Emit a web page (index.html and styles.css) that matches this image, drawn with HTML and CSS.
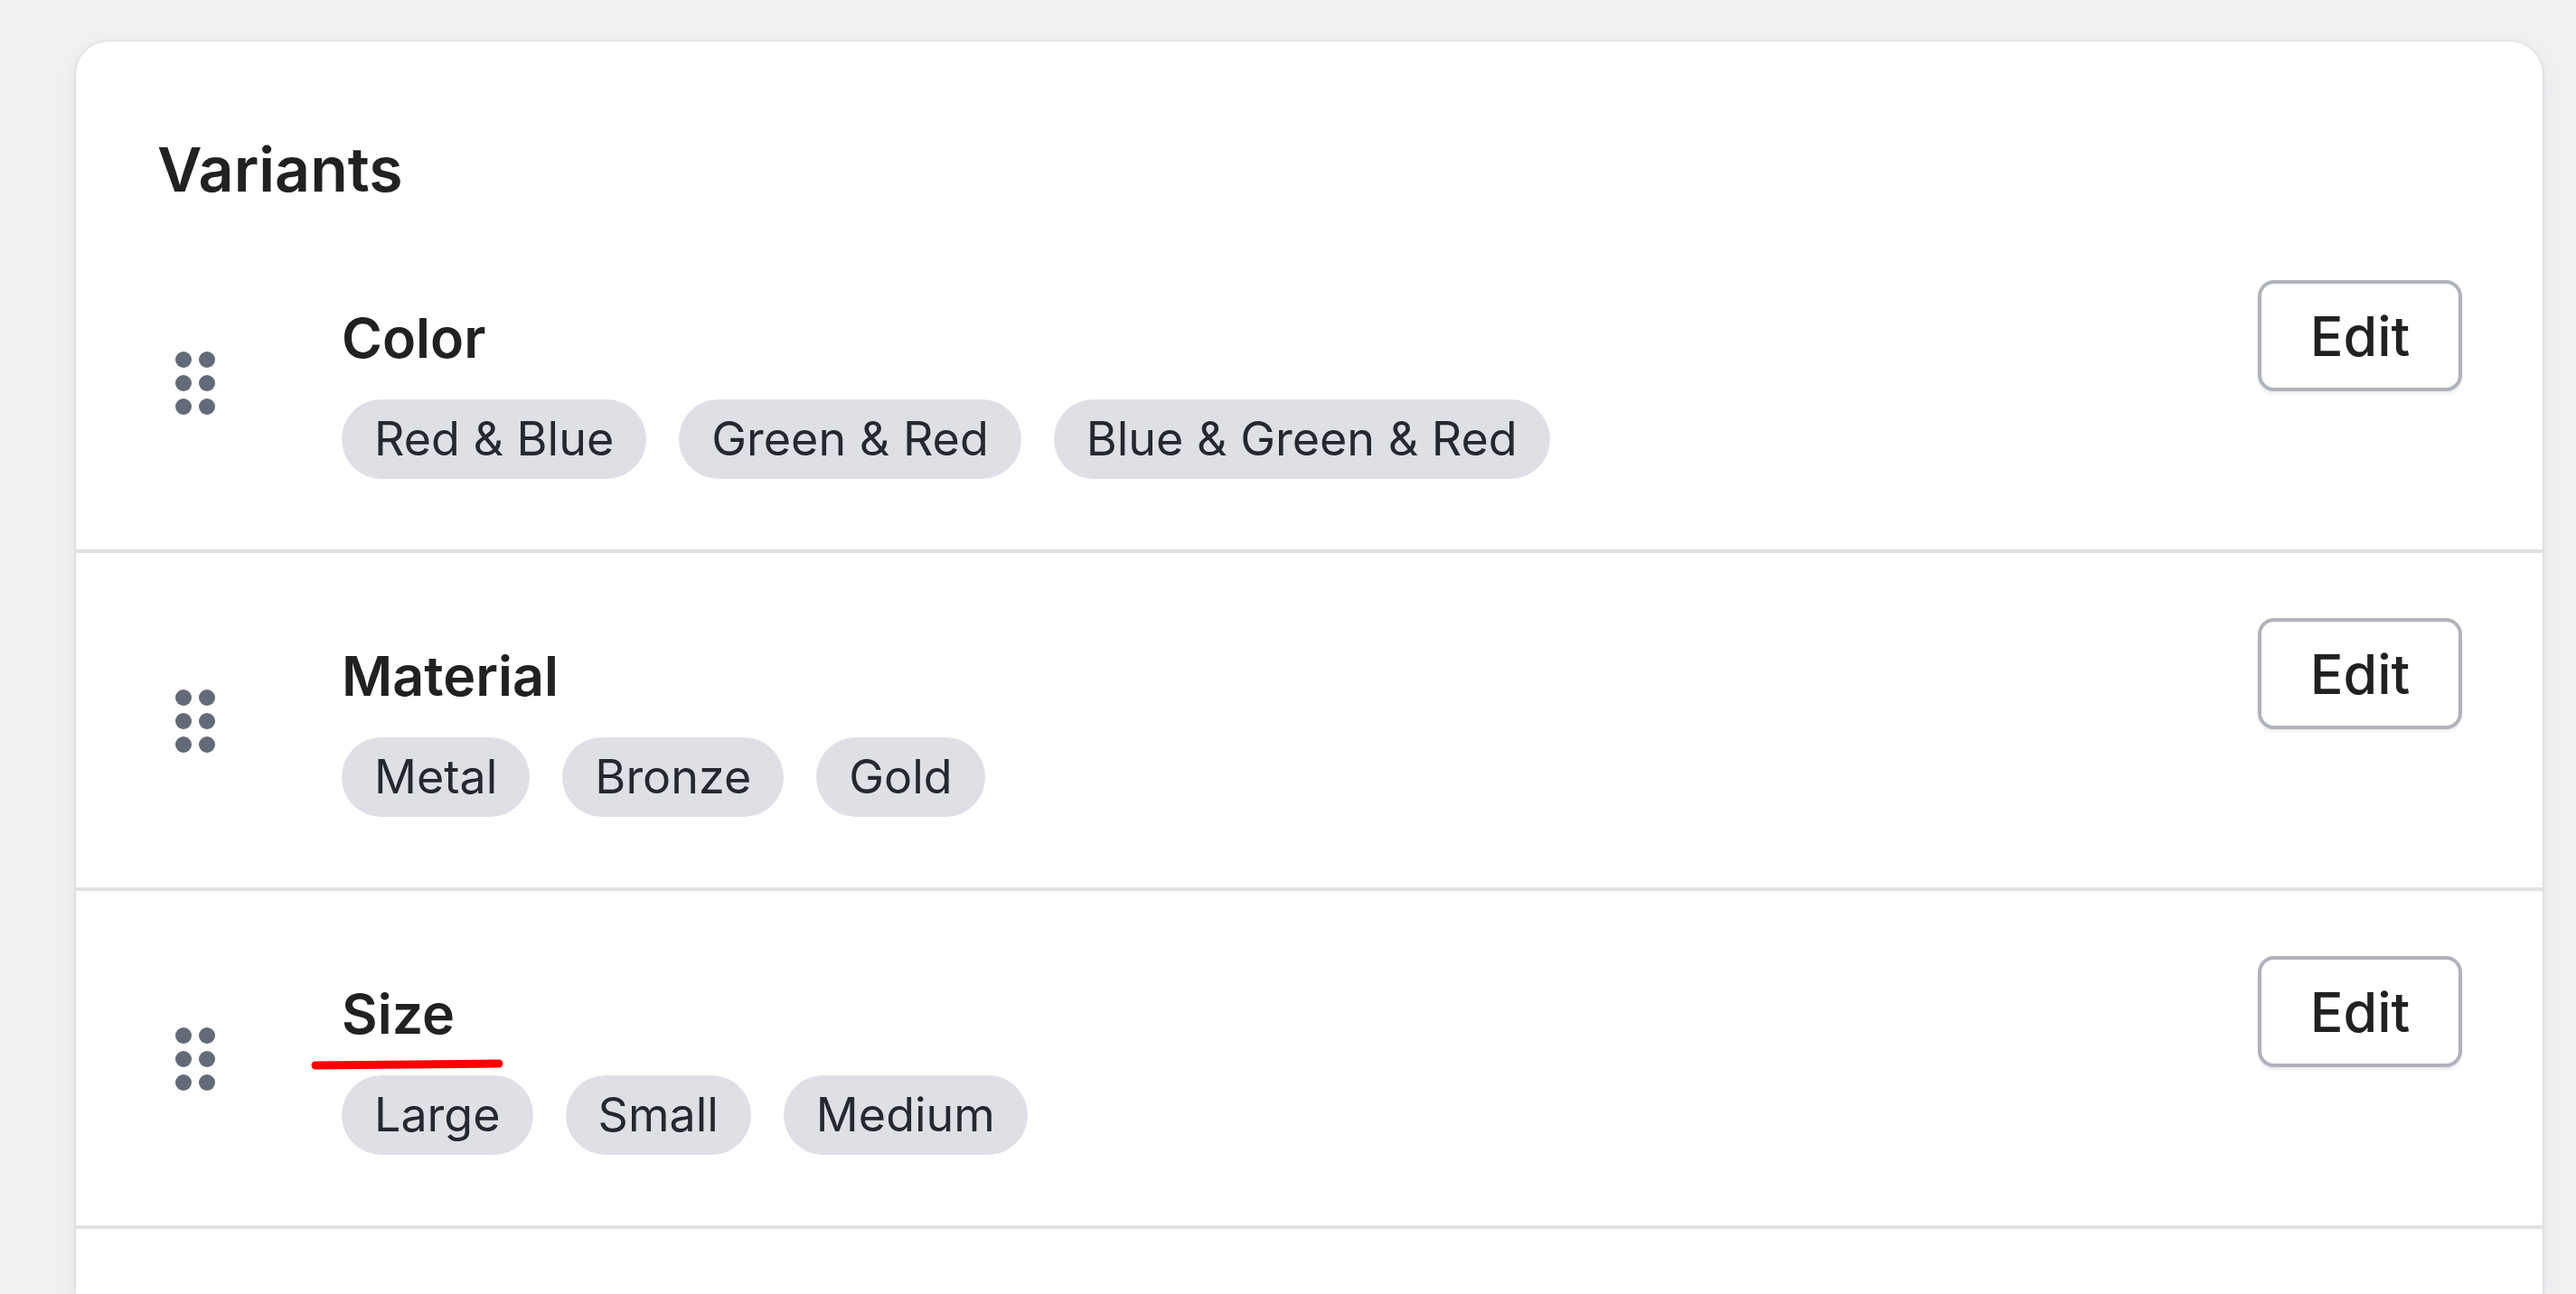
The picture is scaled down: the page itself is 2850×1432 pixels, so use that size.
FILE: index.html
```html
<!DOCTYPE html>
<html lang="en">
<head>
    <meta charset="UTF-8">
    <meta name="viewport" content="width=device-width, initial-scale=1.0">
    <title>Variants</title>
    <link rel="stylesheet" href="styles.css">
</head>
<body>
    <svg class="sprite" aria-hidden="true">
        <symbol id="drag" viewBox="0 0 44 70">
            <circle cx="9" cy="9" r="9"/><circle cx="35" cy="9" r="9"/>
            <circle cx="9" cy="35" r="9"/><circle cx="35" cy="35" r="9"/>
            <circle cx="9" cy="61" r="9"/><circle cx="35" cy="61" r="9"/>
        </symbol>
    </svg>
    <main class="card">
        <h1 class="card-title">Variants</h1>
        <ul class="variants">
            <li class="variant">
                <button class="handle" type="button" aria-label="Reorder Color"><svg><use href="#drag"/></svg></button>
                <div class="variant-body">
                    <h2 class="variant-name">Color</h2>
                    <ul class="tags">
                        <li class="tag">Red &amp; Blue</li>
                        <li class="tag">Green &amp; Red</li>
                        <li class="tag">Blue &amp; Green &amp; Red</li>
                    </ul>
                </div>
                <button class="edit" type="button">Edit</button>
            </li>
            <li class="variant">
                <button class="handle" type="button" aria-label="Reorder Material"><svg><use href="#drag"/></svg></button>
                <div class="variant-body">
                    <h2 class="variant-name">Material</h2>
                    <ul class="tags">
                        <li class="tag">Metal</li>
                        <li class="tag">Bronze</li>
                        <li class="tag">Gold</li>
                    </ul>
                </div>
                <button class="edit" type="button">Edit</button>
            </li>
            <li class="variant">
                <button class="handle" type="button" aria-label="Reorder Size"><svg><use href="#drag"/></svg></button>
                <div class="variant-body">
                    <h2 class="variant-name">Size</h2>
                    <ul class="tags">
                        <li class="tag">Large</li>
                        <li class="tag">Small</li>
                        <li class="tag">Medium</li>
                    </ul>
                    <svg class="marker" viewBox="0 0 216 16" aria-hidden="true"><path d="M5 9 L208 7"/></svg>
                </div>
                <button class="edit" type="button">Edit</button>
            </li>
        </ul>
    </main>
</body>
</html>
```
FILE: styles.css
```css
* {
    box-sizing: border-box;
}
body {
    font-family: Inter, 'Liberation Sans', sans-serif;
    background-color: #eff1f3;
    color: #202123;
    margin: 0;
    padding: 46px 37px 0 84px;
    min-height: 100vh;
    display: flex;
}
h1, h2, ul {
    margin: 0;
    padding: 0;
}
ul {
    list-style: none;
}
.sprite {
    position: absolute;
    width: 0;
    height: 0;
}
.card {
    flex: 1;
    background-color: #fff;
    border-radius: 36px 36px 0 0;
    box-shadow: 0 0 4px rgba(0, 0, 0, 0.12), 0 8px 20px rgba(0, 0, 0, 0.06);
}
.card-title {
    padding: 99px 90px 9px;
    font-size: 68px;
    font-weight: 600;
    line-height: 84px;
}
.variant {
    display: flex;
    align-items: flex-start;
    padding: 72px 89px 78px 90px;
    border-bottom: 4px solid #e1e1e2;
}
.handle {
    align-self: center;
    width: 84px;
    height: 84px;
    margin: 8px 120px 0 0;
    padding: 0;
    border: none;
    background: none;
    cursor: grab;
}
.handle svg {
    display: block;
    width: 44px;
    height: 70px;
    margin: 0 auto;
    fill: #636a78;
}
.variant-body {
    position: relative;
    flex: 1;
    padding-top: 28px;
}
.variant-name {
    margin-bottom: 32px;
    font-size: 61px;
    font-weight: 600;
    line-height: 72px;
}
.tags {
    display: flex;
    flex-wrap: wrap;
    gap: 36px;
}
.tag {
    padding: 0 36px;
    border-radius: 44px;
    background-color: #dfe0e6;
    color: #25282e;
    font-size: 52px;
    line-height: 88px;
}
.edit {
    width: 226px;
    height: 123px;
    padding: 0;
    border: 4px solid #b0b3bd;
    border-radius: 18px;
    background-color: #fff;
    box-shadow: 0 3px 3px rgba(0, 0, 0, 0.07);
    color: #202123;
    font-family: inherit;
    font-size: 61px;
    font-weight: 500;
    cursor: pointer;
}
.marker {
    position: absolute;
    top: 112px;
    left: -34px;
    width: 216px;
    height: 16px;
    fill: none;
    stroke: #f00;
    stroke-width: 9;
    stroke-linecap: round;
}
```
